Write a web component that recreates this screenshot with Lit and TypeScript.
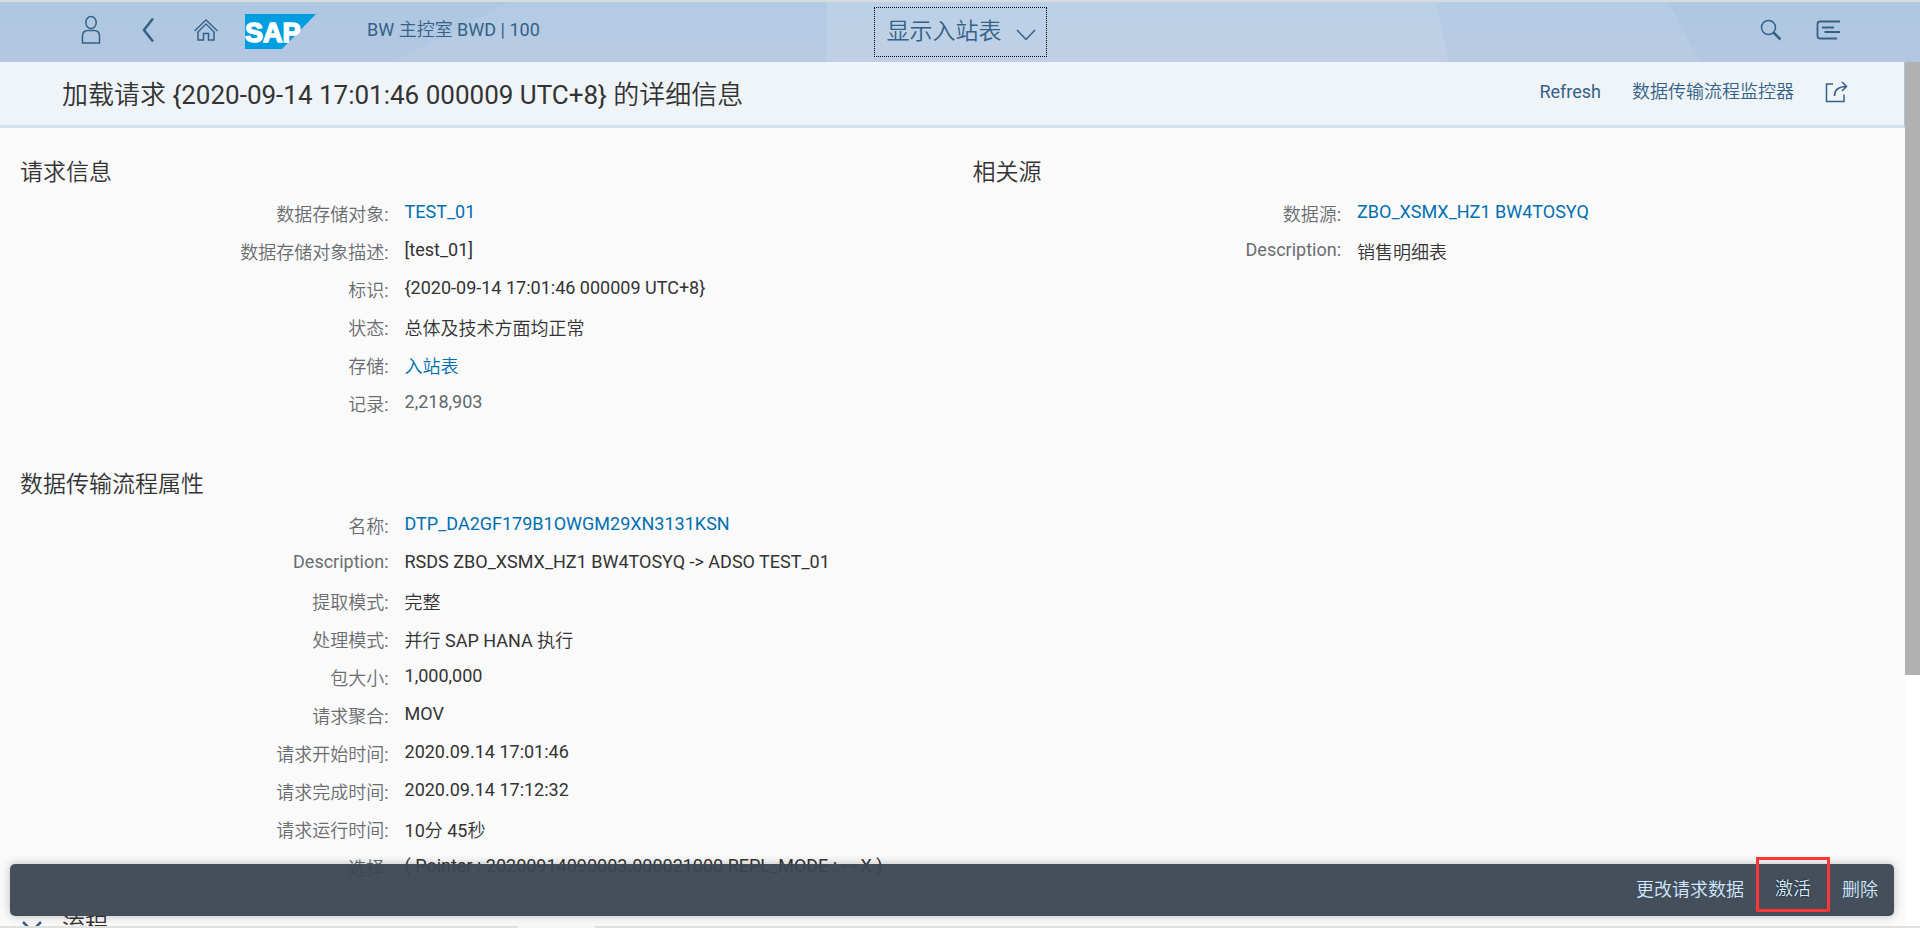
import { LitElement, html, css, svg } from "lit";
import { customElement, property } from "lit/decorators.js";
import { classMap } from "lit/directives/class-map.js";

interface Field {
  label: string;
  value: string;
  kind?: "link" | "muted";
}

const hasHan = (s: string) => /[\u4e00-\u9fff]/.test(s);

const requestInfo: Field[] = [
  { label: "数据存储对象", value: "TEST_01", kind: "link" },
  { label: "数据存储对象描述", value: "[test_01]" },
  { label: "标识", value: "{2020-09-14 17:01:46 000009 UTC+8}" },
  { label: "状态", value: "总体及技术方面均正常" },
  { label: "存储", value: "入站表", kind: "link" },
  { label: "记录", value: "2,218,903", kind: "muted" },
];

const sourceInfo: Field[] = [
  { label: "数据源", value: "ZBO_XSMX_HZ1 BW4TOSYQ", kind: "link" },
  { label: "Description", value: "销售明细表" },
];

const processInfo: Field[] = [
  { label: "名称", value: "DTP_DA2GF179B1OWGM29XN3131KSN", kind: "link" },
  { label: "Description", value: "RSDS ZBO_XSMX_HZ1 BW4TOSYQ -> ADSO TEST_01" },
  { label: "提取模式", value: "完整" },
  { label: "处理模式", value: "并行 SAP HANA 执行" },
  { label: "包大小", value: "1,000,000" },
  { label: "请求聚合", value: "MOV" },
  { label: "请求开始时间", value: "2020.09.14 17:01:46" },
  { label: "请求完成时间", value: "2020.09.14 17:12:32" },
  { label: "请求运行时间", value: "10分 45秒" },
  { label: "选择", value: "( Pointer : 20200914090003.000021000 REPL_MODE : - - X )" },
];

@customElement("field-group")
export class FieldGroup extends LitElement {
  @property() heading = "";
  @property({ attribute: false }) fields: Field[] = [];

  static styles = css`
    :host {
      display: block;
    }
    .heading {
      margin: 0 0 4px;
      padding-left: 20px;
      font-size: 23px;
      line-height: 32px;
      font-weight: inherit;
      color: #333;
    }
    .list {
      margin: 0;
    }
    .row {
      display: grid;
      grid-template-columns: calc(41% - 2px) 1fr;
      column-gap: 16px;
      height: 38px;
      line-height: 38px;
      white-space: nowrap;
    }
    .label {
      text-align: right;
      color: #6a6d70;
    }
    .value {
      margin: 0;
      color: #333;
    }
    .han {
      padding-top: 3px;
    }
    .muted {
      color: #5f696e;
    }
    .link {
      color: #0070b1;
      text-decoration: none;
    }
  `;

  render() {
    return html`
      <h2 class="heading">${this.heading}</h2>
      <dl class="list">
        ${this.fields.map(
          (f) => html`<div class="row">
            <dt class=${classMap({ label: true, han: hasHan(f.label) })}>${f.label}:</dt>
            <dd class=${classMap({ value: true, han: hasHan(f.value), muted: f.kind === "muted" })}>
              ${f.kind === "link" ? html`<a class="link" href="#">${f.value}</a>` : f.value}
            </dd>
          </div>`
        )}
      </dl>
    `;
  }
}

const stroke = (w: number, h: number, body: unknown) => html`<svg
  width=${w}
  height=${h}
  viewBox="0 0 ${w} ${h}"
  fill="none"
  stroke="currentColor"
  stroke-width="1.5"
  aria-hidden="true"
>${body}</svg>`;

const personIcon = stroke(20, 30, svg`
  <ellipse cx="10" cy="7.5" rx="5.2" ry="6"/>
  <path d="M1.5 28V21Q1.5 15.5 7 15.5H13Q18.500 15.500 18.500 21V28Z"/>`);
const backIcon = stroke(14, 26, svg`<path stroke-width="2.500" d="M12 1.500L3 13L12 24.500"/>`);
const homeIcon = stroke(26, 24, svg`
  <path d="M1.500 13L13 2L24.500 13M4.500 14.500L13 6L21.500 14.500" stroke-width="1.300"/>
  <path d="M5 14V22H10.500V15.500H15.500V22H21V14"/>`);
const chevronIcon = stroke(20, 12, svg`<path d="M1 1L10 10.500L19 1"/>`);
const flowIcon = stroke(20, 12, svg`<path stroke-width="2.500" d="M1 1L10 10L19 1"/>`);
const searchIcon = stroke(22, 22, svg`
  <circle cx="8.500" cy="8.500" r="7"/><path d="M13.500 13.500L20.500 20.500" stroke-width="2.500"/>`);
const listIcon = stroke(25, 20, svg`
  <path stroke-width="1.800" d="M24 1.500H4Q1.500 1.500 1.500 4V16Q1.500 18.500 4 18.500H21M6 7.500H18M8.500 12H24"/>`);
const shareIcon = stroke(24, 22, svg`
  <path d="M8 3H1.500V20.500H19V13.500"/>
  <path d="M9.500 15Q9.500 5.500 21.500 5.500M17 1L21.500 5.500L17 10"/>`);

@customElement("app-root")
export class AppRoot extends LitElement {
  static styles = css`
    :host {
      display: flex;
      flex-direction: column;
      height: 100vh;
      overflow: hidden;
      background: #fafafa;
      color: #333;
      font-family: Roboto, "Noto Sans CJK SC DemiLight", "Noto Sans CJK SC Light", "Noto Sans CJK SC", sans-serif;
      font-size: 18px;
      line-height: 26px;
    }
    button {
      font: inherit;
      color: inherit;
      background: none;
      border: 0;
      padding: 0;
      margin: 0;
      cursor: pointer;
      white-space: nowrap;
    }
    svg {
      display: block;
      flex: none;
    }
    .shell {
      position: relative;
      flex: none;
      display: grid;
      grid-template-columns: 1fr auto 1fr;
      height: 60px;
      border-top: 2px solid #d9dbdc;
      background: linear-gradient(#adc8e2, #b3c7e1 85%);
      color: #346187;
    }
    .facets {
      position: absolute;
      inset: 0;
      width: 100%;
      height: 100%;
    }
    .start,
    .end {
      position: relative;
      display: flex;
      align-items: center;
      height: 56px;
    }
    .start {
      padding-left: 81px;
    }
    .back {
      margin-left: 40px;
    }
    .home {
      margin-left: 38px;
    }
    .logo {
      margin: 3px 51px 0 26px;
    }
    .end {
      justify-content: flex-end;
      gap: 34px;
      padding-right: 79px;
    }
    .picker {
      position: relative;
      display: flex;
      align-items: center;
      gap: 14px;
      height: 50px;
      box-sizing: border-box;
      margin-top: 5px;
      padding: 0 10px 0 12px;
      border: 1px dotted #000;
      font-size: 23px;
    }
    .picker svg {
      margin-top: 6px;
    }
    .body {
      flex: 1;
      min-height: 0;
      display: flex;
    }
    .page {
      position: relative;
      flex: 1;
      min-width: 0;
      overflow: hidden;
    }
    .titlebar {
      display: flex;
      align-items: center;
      justify-content: space-between;
      height: 63px;
      padding: 0 55px 0 62px;
      background: #eff4f8;
      border-right: 1px solid #a9c6de;
      border-bottom: 3px solid #d3e1ee;
    }
    .title {
      margin: 2px 0 0;
      font-size: 26px;
      line-height: 36px;
      font-weight: inherit;
    }
    .actions {
      display: flex;
      align-items: center;
      gap: 31px;
      padding-bottom: 3px;
      color: #346187;
    }
    .columns {
      display: grid;
      grid-template-columns: 1fr 1fr;
      row-gap: 48px;
      padding-top: 29px;
    }
    .flow {
      display: flex;
      align-items: center;
      gap: 20px;
      padding: 26px 0 0 22px;
      font-size: 23px;
      line-height: 32px;
    }
    .flow svg {
      color: #346187;
    }
    .flow h2 {
      margin: 0;
      font-size: inherit;
      font-weight: inherit;
    }
    .footer {
      position: absolute;
      left: 10px;
      right: 11px;
      bottom: 10px;
      height: 52px;
      box-sizing: border-box;
      display: flex;
      align-items: center;
      justify-content: flex-end;
      padding-right: 16px;
      border-radius: 5px;
      background: rgba(58, 70, 82, 0.95);
      box-shadow: 0 0 10px rgba(0, 0, 0, 0.25);
      color: #d1e8ff;
      text-shadow: 0 0 2px #000;
    }
    .marked {
      height: 55px;
      margin: 0 12px 12px;
      box-sizing: border-box;
      padding: 10px 16px 0;
      border: 3px solid #fa3636;
      text-shadow: inherit;
    }
    .scroll {
      flex: none;
      width: 15px;
      background: #fff;
    }
    .thumb {
      height: 71%;
      background: #b1b1b1;
    }
    .edge {
      flex: none;
      height: 2px;
      background: linear-gradient(90deg, #e0e0e0 27%, #f5f5f5 27% 31%, #e0e0e0 31%);
    }
  `;

  render() {
    return html`
      <header class="shell">
        <svg class="facets" viewBox="0 0 1920 60" preserveAspectRatio="none" aria-hidden="true">
          <polygon points="510,0 827,0 827,60 393,60" fill="#fff" opacity="0.07" />
          <polygon points="827,0 1436,0 1449,60 827,60" fill="#fff" opacity="0.17" />
          <polygon points="1436,0 1669,0 1699,60 1449,60" fill="#fff" opacity="0.08" />
        </svg>
        <div class="start">
          <button aria-label="用户">${personIcon}</button>
          <button class="back" aria-label="返回">${backIcon}</button>
          <button class="home" aria-label="主页">${homeIcon}</button>
          <svg class="logo" width="71" height="35" viewBox="0 0 71 35" role="img" aria-label="SAP">
            <polygon points="0,0 71,0 37,35 0,35" fill="#009de0" />
            <text x="0" y="28" font-family="Liberation Sans, sans-serif" font-size="27" font-weight="700" fill="#fff" stroke="#fff" stroke-width="1.5">SAP</text>
          </svg>
          <span>BW 主控室 BWD | 100</span>
        </div>
        <button class="picker"><span>显示入站表</span>${chevronIcon}</button>
        <div class="end">
          <button aria-label="搜索">${searchIcon}</button>
          <button aria-label="通知">${listIcon}</button>
        </div>
      </header>
      <div class="body">
        <main class="page">
          <div class="titlebar">
            <h1 class="title">加载请求 {2020-09-14 17:01:46 000009 UTC+8} 的详细信息</h1>
            <div class="actions">
              <button>Refresh</button>
              <button>数据传输流程监控器</button>
              <button aria-label="共享">${shareIcon}</button>
            </div>
          </div>
          <div class="columns">
            <field-group heading="请求信息" .fields=${requestInfo}></field-group>
            <field-group heading="相关源" .fields=${sourceInfo}></field-group>
            <field-group heading="数据传输流程属性" .fields=${processInfo}></field-group>
          </div>
          <div class="flow">${flowIcon}<h2>流程</h2></div>
          <div class="footer">
            <button>更改请求数据</button>
            <button class="marked">激活</button>
            <button>删除</button>
          </div>
        </main>
        <div class="scroll"><div class="thumb"></div></div>
      </div>
      <div class="edge"></div>
    `;
  }
}
